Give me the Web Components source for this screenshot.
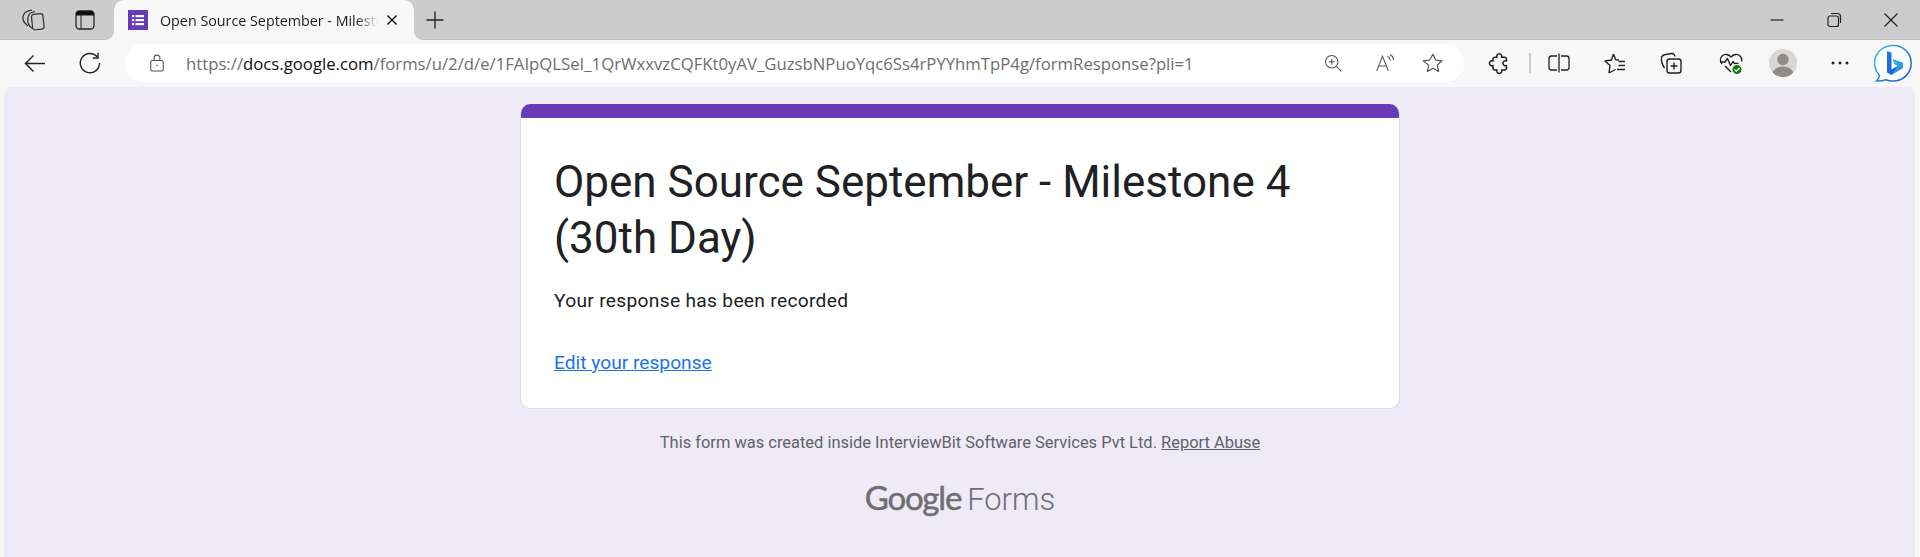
<!DOCTYPE html>
<html lang="en">
<head>
<meta charset="utf-8">
<title>Open Source September - Milestone 4 (30th Day)</title>
<style>
  html,body{margin:0;height:100%;overflow:hidden;background:#f7f7f7;}
  body{display:flex;flex-direction:column;}
</style>
</head>
<body>
<tab-strip></tab-strip>
<nav-bar></nav-bar>
<form-page>
  <form-card>
    <span slot="title">Open Source September - Milestone 4 (30th Day)</span>
    <span slot="message">Your response has been recorded</span>
    <a slot="action" href="#">Edit your response</a>
  </form-card>
  <form-footer></form-footer>
</form-page>

<script>
/* ---------- iconos del navegador ---------- */
const ICONS = {
  collections:`<svg viewBox="0 0 24 24" fill="none" stroke="#333" stroke-width="1.200"><rect x="11" y="6" width="11.500" height="15.500" rx="2.500" transform="rotate(-6 16.500 13.500)"/><path d="M11.500 20.500C8 18.500 6.500 15 6.800 11c.2-3 1.500-5.500 4-6.500l3-.8"/><path d="M7 18C3.500 15.500 1.500 12.500 2 9c.4-3 2.500-5.500 5.500-6.200l3.500-.6"/></svg>`,
  tabs:`<svg viewBox="0 0 24 24" fill="none"><rect x="3" y="3" width="18" height="18" rx="3.500" stroke="#222" stroke-width="1.300"/><path d="M3 7.500V6a3 3 0 0 1 3-3h12a3 3 0 0 1 3 3v1.500z" fill="#111"/><path d="M8 7v14" stroke="#333" stroke-width="1.100"/></svg>`,
  close:`<svg viewBox="0 0 24 24" fill="none" stroke="#111" stroke-width="1.700"><path d="M6.500 6.500l11 11M17.500 6.500l-11 11"/></svg>`,
  plus:`<svg viewBox="0 0 24 24" fill="none" stroke="#222" stroke-width="1.300"><path d="M12 3.500v17M3.500 12h17"/></svg>`,
  min:`<svg viewBox="0 0 24 24" fill="none" stroke="#222" stroke-width="1.200"><path d="M5.500 12h13"/></svg>`,
  restore:`<svg viewBox="0 0 24 24" fill="none" stroke="#222" stroke-width="1.200"><rect x="6" y="8" width="10.500" height="10.500" rx="2"/><path d="M9 5.500h6.500a3 3 0 0 1 3 3V15"/></svg>`,
  winclose:`<svg viewBox="0 0 24 24" fill="none" stroke="#222" stroke-width="1.200"><path d="M5.500 5.500l13 13M18.500 5.500l-13 13"/></svg>`,
  back:`<svg viewBox="0 0 24 24" fill="none" stroke="#222" stroke-width="1.400"><path d="M22 12.500H2.500M10.500 4.500l-8 8 8 8"/></svg>`,
  refresh:`<svg viewBox="0 0 24 24" fill="none" stroke="#222" stroke-width="1.400"><path d="M19.500 6.300A9.600 9.600 0 1 0 21.500 12"/><path d="M20 1.800v5.200h-5.200"/></svg>`,
  lock:`<svg viewBox="0 0 24 24" fill="none" stroke="#555" stroke-width="1.300"><rect x="4.500" y="9" width="15" height="12.500" rx="2"/><path d="M8.500 9V6a3.500 3.500 0 0 1 7 0v3"/><circle cx="12" cy="15" r="1" fill="#555" stroke="none"/></svg>`,
  zoomin:`<svg viewBox="0 0 24 24" fill="none" stroke="#555" stroke-width="1.300"><circle cx="10.500" cy="10.500" r="7.500"/><path d="M16 16l6 6M10.500 6.800v7.400M6.800 10.500h7.400"/></svg>`,
  read:`<svg viewBox="0 0 24 24" fill="none" stroke="#555" stroke-width="1.300"><path d="M2 21.500L9 4l7 17.500M4.500 15.500h9"/><path d="M15 4c2 .8 3.200 2.500 3.500 5M18 1.800c2.500 1.200 4 3.500 4.300 6.500"/></svg>`,
  star:`<svg viewBox="0 0 24 24" fill="none" stroke="#555" stroke-width="1.300" stroke-linejoin="round"><path d="M12 2.500l2.900 6.300 6.900.8-5.100 4.700 1.400 6.900-6.100-3.500-6.100 3.500 1.400-6.900L1.300 9.600l6.900-.8z"/></svg>`,
  extension:`<svg viewBox="0 0 24 24" fill="none" stroke="#222" stroke-width="1.500" stroke-linejoin="round"><path d="M10 6.300a2.500 2.500 0 1 1 4.500 0L17.500 6.300Q19.500 6.300 19.500 8.300V10a2.500 2.500 0 1 0 0 4.500V17Q19.500 19 17.500 19H14.500a2.500 2.500 0 1 1-4.500 0H8Q6 19 6 17V14.600a2.500 2.500 0 1 1 0-4.500V8.300Q6 6.300 8 6.300Z"/></svg>`,
  split:`<svg viewBox="0 0 24 24" fill="none" stroke="#222" stroke-width="1.300"><path d="M10 5H4.500A2.500 2.500 0 0 0 2 7.500v9A2.500 2.500 0 0 0 4.500 19H10M14 5h5.500A2.500 2.500 0 0 1 22 7.500v9a2.500 2.500 0 0 1-2.500 2.500H14"/><path d="M12 2.500v19"/></svg>`,
  favorites:`<svg viewBox="0 0 24 24" fill="none" stroke="#222" stroke-width="1.400" stroke-linejoin="round"><path d="M10.500 3l2.200 5.800 3.300.2M6 22l1-7.500-5-4.500 6.500-1L10.500 3M6 22l6.500-3.500"/><path d="M15.500 10.500H22M15.500 14.500H22M14 18.500h8"/></svg>`,
  addcollection:`<svg viewBox="0 0 24 24" fill="none" stroke="#222" stroke-width="1.400"><rect x="8" y="8" width="14" height="14" rx="2.500"/><path d="M15 11.500v7M11.500 15h7"/><path d="M5.500 17C3.500 14 2 10 2.500 7c.3-2 1.500-3 3-3.300l7-1.200c2-.3 3 .8 3.500 3"/></svg>`,
  health:`<svg viewBox="0 0 24 24" fill="none" stroke="#222" stroke-width="1.400" stroke-linejoin="round"><path d="M3 13C1 10.500 1 7 3 5c2.500-2.500 6.500-2 9 1 2.500-3 6.500-3.500 9-1 1.500 1.500 2 3.500 1.500 5.500"/><path d="M1 11h5l2.500-3.500 3 7 2.500-4 1.500 2h4"/><path d="M6 15l6 6"/><circle cx="18" cy="18.500" r="5" fill="#107c10" stroke="#f7f7f7" stroke-width="1"/><path d="M15.500 18.500l1.800 1.800 3.200-3.300" stroke="#fff" stroke-width="1.300"/></svg>`,
  more:`<svg viewBox="0 0 24 24" fill="#222"><circle cx="5" cy="12" r="1.500"/><circle cx="12" cy="12" r="1.500"/><circle cx="19" cy="12" r="1.500"/></svg>`
};

/* ---------- icono generico ---------- */
class UiIcon extends HTMLElement {
  connectedCallback() {
    const size = this.getAttribute('size') || 24;
    const root = this.attachShadow({ mode: 'open' });
    root.innerHTML = `
<style>
  :host{display:flex;flex:none;width:${size}px;height:${size}px;}
  svg{width:100%;height:100%;display:block;}
</style>${ICONS[this.getAttribute('name')]}`;
  }
}
customElements.define('ui-icon', UiIcon);

/* ---------- barra de pestañas ---------- */
class TabStrip extends HTMLElement {
  connectedCallback() {
    this.attachShadow({ mode: 'open' }).innerHTML = `
<style>
  :host{display:flex;flex:none;height:40px;background:#ccc;align-items:center;box-sizing:border-box;padding-left:21px;box-shadow:inset 0 -1px 0 #bdbdbd;}
  .tab{position:relative;flex:none;box-sizing:border-box;width:300px;height:40px;margin-left:17px;background:#f7f7f7;border-radius:10px 10px 0 0;display:flex;align-items:center;padding-left:14px;}
  .tab::before,.tab::after{content:"";position:absolute;bottom:0;width:8px;height:8px;background:radial-gradient(circle at 0 0,#ccc 7.500px,#f7f7f7 8px);}
  .tab::before{left:-8px;}
  .tab::after{right:-8px;transform:scaleX(-1);}
  .fav{flex:none;width:20px;height:20px;background:#673ab7;display:flex;}
  .title{width:218px;margin-left:12px;white-space:nowrap;overflow:hidden;font:14.300px "Open Sans","Noto Sans",sans-serif;color:#1b1b1b;-webkit-mask-image:linear-gradient(90deg,#000 90%,transparent);mask-image:linear-gradient(90deg,#000 90%,transparent);}
  .x{margin-left:4px;}
  .plus{margin-left:9px;}
  .win{margin-left:auto;display:flex;padding-right:17px;gap:33px;}
</style>
<ui-icon name="collections"></ui-icon>
<ui-icon name="tabs" style="margin-left:28px"></ui-icon>
<div class="tab">
  <div class="fav"><svg viewBox="0 0 20 20" width="20" height="20"><g fill="#fff"><rect x="4" y="5" width="2.200" height="2.200"/><rect x="7.500" y="5" width="8.500" height="2.200"/><rect x="4" y="9" width="2.200" height="2.200"/><rect x="7.500" y="9" width="8.500" height="2.200"/><rect x="4" y="13" width="2.200" height="2.200"/><rect x="7.500" y="13" width="8.500" height="2.200"/></g></svg></div>
  <div class="title">Open Source September - Milestone 4 (30th Day)</div>
  <ui-icon class="x" name="close" size="20"></ui-icon>
</div>
<ui-icon class="plus" name="plus"></ui-icon>
<div class="win">
  <ui-icon name="min"></ui-icon>
  <ui-icon name="restore"></ui-icon>
  <ui-icon name="winclose"></ui-icon>
</div>`;
  }
}
customElements.define('tab-strip', TabStrip);

/* ---------- barra de direcciones y herramientas ---------- */
class NavBar extends HTMLElement {
  connectedCallback() {
    this.attachShadow({ mode: 'open' }).innerHTML = `
<style>
  :host{display:flex;flex:none;height:48px;background:#f7f7f7;align-items:center;box-sizing:border-box;padding:0 8px 2px 23px;}
  .pill{flex:1;height:38px;margin-left:23px;background:#fff;border-radius:19px;display:flex;align-items:center;padding:0 20px 0 22px;box-sizing:border-box;min-width:0;}
  .url{margin-left:19px;font:16.730px "Open Sans","Noto Sans",sans-serif;color:#6e6e6e;white-space:nowrap;}
  .url b{font-weight:400;color:#111;}
  .sep{flex:none;width:2px;height:20px;background:#ccc;}
  .avatar{flex:none;width:28px;height:28px;border-radius:50%;background:#d9d7d4;overflow:hidden;display:flex;}
  .bing{flex:none;width:38px;height:38px;display:flex;}
</style>
<ui-icon name="back"></ui-icon>
<ui-icon name="refresh" style="margin-left:31px"></ui-icon>
<div class="pill">
  <ui-icon name="lock" size="20"></ui-icon>
  <span class="url">https://<b>docs.google.com</b>/forms/u/2/d/e/1FAIpQLSeI_1QrWxxvzCQFKt0yAV_GuzsbNPuoYqc6Ss4rPYYhmTpP4g/formResponse?pli=1</span>
  <ui-icon name="zoomin" size="20" style="margin-left:auto"></ui-icon>
  <ui-icon name="read" size="20" style="margin-left:32px"></ui-icon>
  <ui-icon name="star" size="22" style="margin-left:27px"></ui-icon>
</div>
<ui-icon name="extension" style="margin-left:23px"></ui-icon>
<div class="sep" style="margin-left:18px"></div>
<ui-icon name="split" style="margin-left:16px"></ui-icon>
<ui-icon name="favorites" style="margin-left:32px"></ui-icon>
<ui-icon name="addcollection" style="margin-left:32px"></ui-icon>
<ui-icon name="health" style="margin-left:36px"></ui-icon>
<div class="avatar" style="margin-left:26px"><svg viewBox="0 0 28 28" width="28" height="28"><circle cx="14" cy="10.500" r="5.700" fill="#8f8b87"/><ellipse cx="14" cy="24" rx="10" ry="6.500" fill="#8f8b87"/></svg></div>
<ui-icon name="more" style="margin-left:31px"></ui-icon>
<div class="bing" style="margin-left:22px">
  <svg viewBox="0 0 38 38" width="38" height="38">
    <defs>
      <linearGradient id="ring" x1="0" y1="0" x2="1" y2="1"><stop offset="0" stop-color="#35c1f1"/><stop offset="1" stop-color="#1b4fd8"/></linearGradient>
      <linearGradient id="bee" x1="0" y1="0" x2="1" y2="1"><stop offset="0" stop-color="#1e7fe0"/><stop offset="1" stop-color="#1b4bd0"/></linearGradient>
      <linearGradient id="wing" x1="0" y1="0" x2="1" y2="1"><stop offset="0" stop-color="#37c7f0"/><stop offset="1" stop-color="#2a80e8"/></linearGradient>
    </defs>
    <path d="M19 1.500a17.700 17.700 0 0 1 1 35.400c-3 .2-5.500-.2-8-1.200-2.500 .8-6 1.500-9.500 1.300 1.500-1.500 2.800-3.500 3-5.500A17.700 17.700 0 0 1 19 1.500z" fill="#fff" stroke="url(#ring)" stroke-width="1.500"/>
    <path d="M13 7l4.500 1.500v17l6.500-3.700-3.300-1.500-2-5 10 3.500v5L17.500 31 13 28.500z" fill="url(#bee)"/>
    <path d="M18.700 15.800l10 3.500v5l-11.200 6.500 6.500-8.800-3.300-1.500z" fill="url(#wing)"/>
  </svg>
</div>`;
  }
}
customElements.define('nav-bar', NavBar);

/* ---------- zona de contenido lila ---------- */
class FormPage extends HTMLElement {
  constructor() {
    super();
    this.attachShadow({ mode: 'open' }).innerHTML = `
<style>
  :host{display:flex;flex:1;min-height:0;flex-direction:column;align-items:center;box-sizing:border-box;margin:-1px 5px 0 4px;padding:17px 0 0 1px;background:#eeeaf8;border-radius:8px 8px 0 0;overflow:hidden;}
</style>
<slot></slot>`;
  }
}
customElements.define('form-page', FormPage);

/* ---------- tarjeta de respuesta ---------- */
class FormCard extends HTMLElement {
  constructor() {
    super();
    this.attachShadow({ mode: 'open' }).innerHTML = `
<style>
  :host{display:block;flex:none;box-sizing:border-box;width:880px;height:305px;background:#fff;border-radius:10px;border:1px solid #dadce0;border-top:0;overflow:hidden;font-family:Roboto,sans-serif;color:#202124;}
  .bar{height:14px;margin:0 -1px;background:#673ab7;}
  .body{padding:36px 33px 0;}
  h1{margin:0;font-weight:400;font-size:44px;line-height:56px;}
  p{margin:21px 0 0;font-size:19.200px;line-height:28px;letter-spacing:.3px;}
  .action{margin-top:34px;font-size:19.200px;line-height:28px;}
  ::slotted(a){color:#1a73e8;}
</style>
<div class="bar"></div>
<div class="body">
  <h1><slot name="title"></slot></h1>
  <p><slot name="message"></slot></p>
  <div class="action"><slot name="action"></slot></div>
</div>`;
  }
}
customElements.define('form-card', FormCard);

/* ---------- pie de pagina ---------- */
class FormFooter extends HTMLElement {
  constructor() {
    super();
    this.attachShadow({ mode: 'open' }).innerHTML = `
<style>
  :host{display:flex;flex-direction:column;align-items:center;flex:none;margin-top:22px;font:16.470px/24px Roboto,sans-serif;color:#5f6368;}
  a{color:inherit;}
  .logo{display:flex;align-items:baseline;margin-top:22px;color:#6f6e72;}
  .g{font:400 33px/40px Lato,sans-serif;letter-spacing:-1.200px;-webkit-text-stroke:.5px #6f6e72;}
  .f{font:300 31px/40px Roboto,sans-serif;margin-left:6px;}
</style>
<div>This form was created inside InterviewBit Software Services Pvt Ltd. <a href="#">Report Abuse</a></div>
<div class="logo"><span class="g">Google</span><span class="f">Forms</span></div>`;
  }
}
customElements.define('form-footer', FormFooter);
</script>
</body>
</html>
